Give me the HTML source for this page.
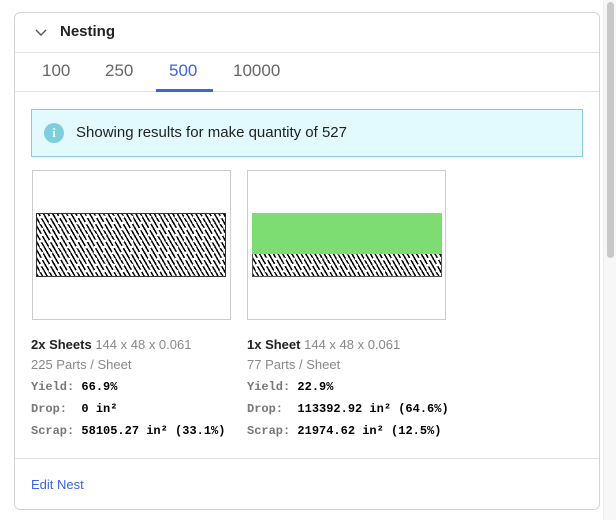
<!DOCTYPE html>
<html><head><style>
body{margin:0;width:616px;height:520px;background:#fff;font-family:"Liberation Sans",sans-serif;position:relative;overflow:hidden}
.card{position:absolute;left:14px;top:12px;width:586px;height:498px;border:1px solid #d4d4d4;border-radius:6px;box-sizing:border-box}
.sb{position:absolute;left:603px;top:0;width:13px;height:520px;background:#f7f7f7;border-left:1px solid #eee}
.sb div{position:absolute;left:3px;top:2px;width:7px;height:256px;background:#c8c8c8;border-radius:4px}
.abs{position:absolute}
.mono{font-family:"Liberation Mono",monospace;font-size:12px;font-weight:bold;white-space:pre}
.lbl{color:#777}
.nest{background-color:#fff;background-image:radial-gradient(ellipse 3px 2px at 50% 50%,#fff 60%,transparent 70%),repeating-linear-gradient(60deg,#000 0 1.5px,#fff 1.5px 4px),repeating-linear-gradient(0deg,#000 0 1px,#fff 1px 6px);background-size:9px 6px,auto,auto}
</style></head><body>
<div class="sb"><div></div></div>
<div class="card"></div>
<svg class="abs" style="left:35px;top:27px" width="12" height="10"><path d="M1 3 L6 8 L11 3" fill="none" stroke="#555" stroke-width="1.4"/></svg>
<div class="abs" style="left:60px;top:23px;font-size:15px;font-weight:bold;color:#222">Nesting</div>
<div class="abs" style="left:15px;top:52px;width:584px;height:1px;background:#e2e2e2"></div>
<div class="abs" style="left:15px;top:91px;width:584px;height:1px;background:#e2e2e2"></div>
<div class="abs" style="left:42px;top:61px;font-size:17px;color:#666">100</div>
<div class="abs" style="left:105px;top:61px;font-size:17px;color:#666">250</div>
<div class="abs" style="left:169px;top:61px;font-size:17px;color:#3b64e0">500</div>
<div class="abs" style="left:233px;top:61px;font-size:17px;color:#666">10000</div>
<div class="abs" style="left:156px;top:89px;width:57px;height:3px;background:#3b64e0"></div>
<div class="abs" style="left:31px;top:109px;width:552px;height:48px;box-sizing:border-box;background:#e2fafd;border:1px solid #7fd0dc"></div>
<div class="abs" style="left:44px;top:123px;width:20px;height:20px;border-radius:50%;background:#7dcfdc;color:#fff;font-size:13px;font-weight:bold;text-align:center;line-height:20px;font-family:'Liberation Serif',serif">i</div>
<div class="abs" style="left:76px;top:124px;font-size:15px;color:#222">Showing results for make quantity of 527</div>
<div class="abs" style="left:32px;top:170px;width:199px;height:150px;border:1px solid #ccc;box-sizing:border-box"></div>
<div class="abs" style="left:247px;top:170px;width:199px;height:150px;border:1px solid #ccc;box-sizing:border-box"></div>
<div class="abs nest" style="left:36px;top:213px;width:190px;height:64px;border:1px solid #333;box-sizing:border-box"></div>
<div class="abs nest" style="left:252px;top:213px;width:190px;height:64px;box-sizing:border-box;border:1px solid #555"></div>
<div class="abs" style="left:252px;top:213px;width:190px;height:41px;background:#7ddd72"></div>
<div class="abs" style="left:31px;top:337px;font-size:13px;color:#222"><b>2x Sheets</b> <span style="color:#888">144 x 48 x 0.061</span></div>
<div class="abs" style="left:31px;top:357px;font-size:13px;color:#888">225 Parts / Sheet</div>
<div class="abs mono" style="left:31px;top:380px"><span class="lbl">Yield:</span> 66.9%</div>
<div class="abs mono" style="left:31px;top:402px"><span class="lbl">Drop:</span>  0 in²</div>
<div class="abs mono" style="left:31px;top:424px"><span class="lbl">Scrap:</span> 58105.27 in² (33.1%)</div>
<div class="abs" style="left:247px;top:337px;font-size:13px;color:#222"><b>1x Sheet</b> <span style="color:#888">144 x 48 x 0.061</span></div>
<div class="abs" style="left:247px;top:357px;font-size:13px;color:#888">77 Parts / Sheet</div>
<div class="abs mono" style="left:247px;top:380px"><span class="lbl">Yield:</span> 22.9%</div>
<div class="abs mono" style="left:247px;top:402px"><span class="lbl">Drop:</span>  113392.92 in² (64.6%)</div>
<div class="abs mono" style="left:247px;top:424px"><span class="lbl">Scrap:</span> 21974.62 in² (12.5%)</div>
<div class="abs" style="left:15px;top:458px;width:584px;height:1px;background:#e2e2e2"></div>
<div class="abs" style="left:31px;top:477px;font-size:13px;color:#3b64e0">Edit Nest</div>
</body></html>
